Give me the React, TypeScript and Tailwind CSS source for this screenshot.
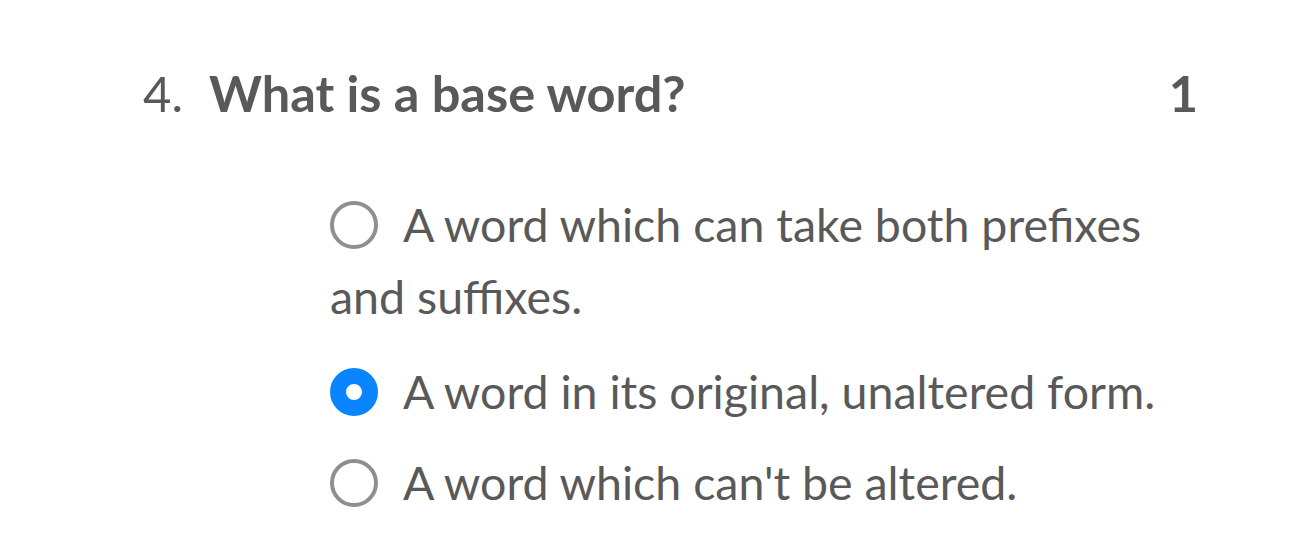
import { useState } from "react";

const options = [
  "A word which can take both prefixes and suffixes.",
  "A word in its original, unaltered form.",
  "A word which can't be altered.",
];

function Radio({ checked }: { checked: boolean }) {
  return checked ? (
    <span className="inline-block size-[48px] rounded-full border-[16px] border-[#0a84ff] bg-white align-[-7px] mr-[25px]" />
  ) : (
    <span className="inline-block size-[48px] rounded-full border-[4px] border-[#8e8e93] bg-white align-[-7px] mr-[25px]" />
  );
}

export default function App() {
  const [selected, setSelected] = useState(1);

  return (
    <div className="min-h-screen bg-white text-[#595959] font-['Lato',sans-serif] pl-[143px] pr-[92px] pt-[61px]">
      <div className="flex items-baseline justify-between leading-[64px]">
        <div className="flex items-baseline">
          <span className="text-[49px] w-[66px]">4.</span>
          <span className="text-[50.5px] font-bold">What is a base word?</span>
        </div>
        <span className="text-[50.5px] font-bold">1</span>
      </div>
      <div className="ml-[187px] mt-[63px] mr-[2px] text-[46.5px] leading-[72px]">
        {options.map((o, i) => (
          <label
            key={o}
            className={"block cursor-pointer " + (i === 1 ? "mt-[23px]" : i === 2 ? "mt-[19px]" : "")}
            onClick={() => setSelected(i)}
          >
            <Radio checked={selected === i} />
            {o}
          </label>
        ))}
      </div>
    </div>
  );
}
